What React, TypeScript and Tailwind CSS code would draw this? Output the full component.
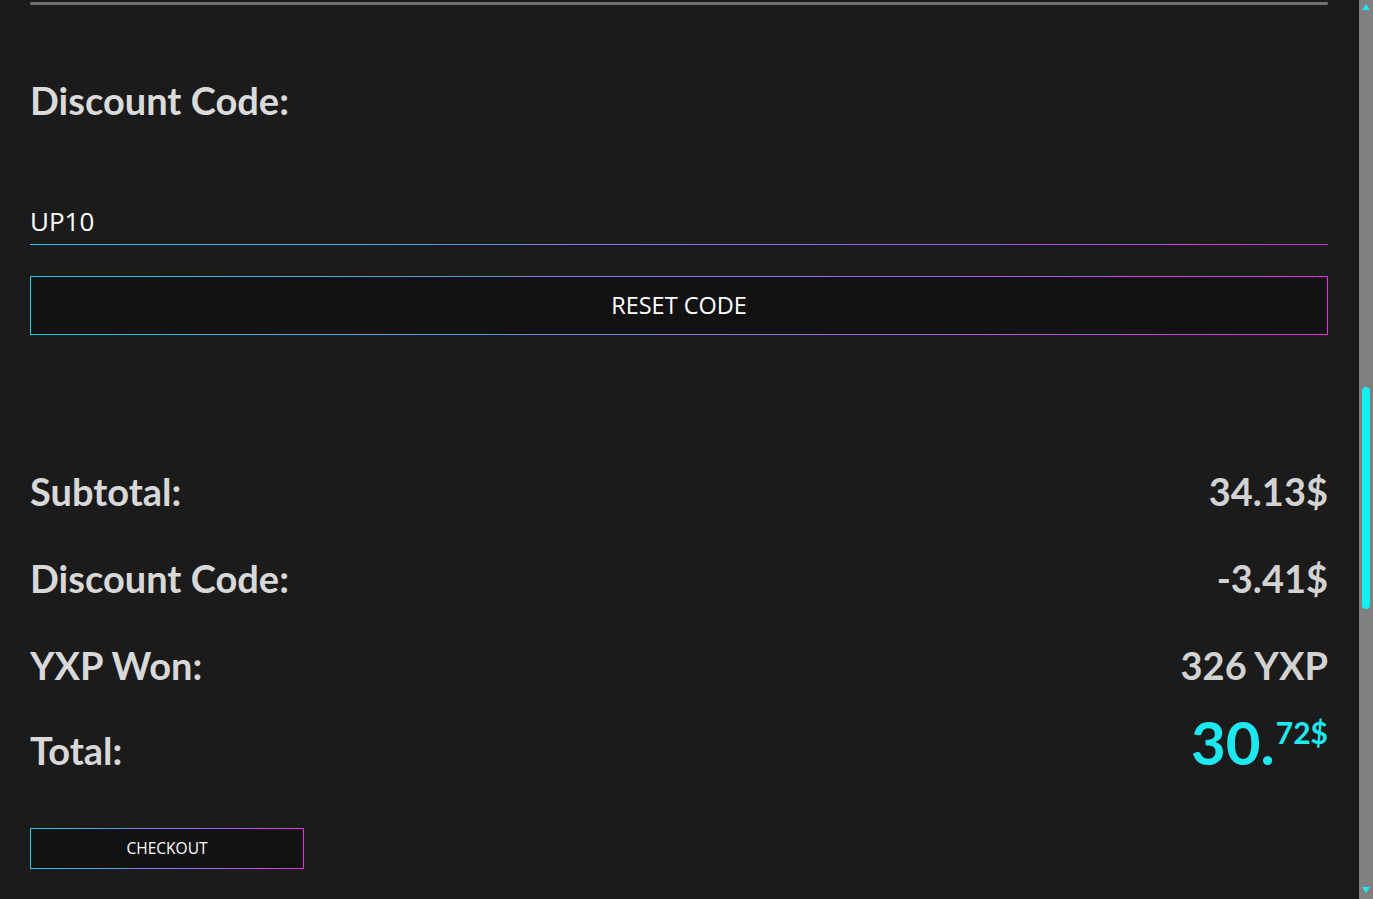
import { useState } from 'react';

const rows = [
  { label: 'Subtotal:', value: '34.13$' },
  { label: 'Discount Code:', value: '-3.41$' },
  { label: 'YXP Won:', value: '326 YXP' },
];

const gradientBorder = 'border border-solid [border-image:linear-gradient(to_right,#22cce4,#e030e0)_1]';

function GradientButton({ className, children }: { className: string; children: React.ReactNode }) {
  return (
    <button
      className={`${gradientBorder} bg-[#121212] text-white flex items-center justify-center font-['Open_Sans',sans-serif] ${className}`}
    >
      {children}
    </button>
  );
}

export default function App() {
  const [code, setCode] = useState('UP10');

  return (
    <div className="flex h-[899px] w-full overflow-hidden bg-[#1b1b1b] font-['Lato',sans-serif]">
      <main className="flex-1 px-[30px] pt-[2px]">
        <div className="h-[3px] rounded-full bg-[#707070]" />

        <h2 className="mt-[76px] text-[38px] leading-[38px] font-bold text-[#dadada]">Discount Code:</h2>

        <div className="mt-[80px]">
          <input
            value={code}
            onChange={(e) => setCode(e.target.value)}
            className="block w-full h-[45px] pb-[2px] bg-transparent text-[26px] text-white outline-none font-['Open_Sans',sans-serif]"
          />
          <div className="h-px bg-[linear-gradient(to_right,#22cce4,#d030d8)]" />
        </div>

        <GradientButton className="mt-[31px] w-full h-[59px]">
          <span className="text-[23.5px]">RESET CODE</span>
        </GradientButton>

        <div className="mt-[137px] flex flex-col gap-[49px]">
          {rows.map((r) => (
            <div key={r.label} className="flex justify-between items-baseline text-[38px] leading-[38px] text-[#d8d8d8]">
              <span className="font-bold">{r.label}</span>
              <span className="font-bold text-[#d2d2d2]">{r.value}</span>
            </div>
          ))}
        </div>

        <div className="mt-[28px] flex justify-between items-baseline">
          <span className="text-[38px] leading-[38px] font-bold text-[#d8d8d8]">Total:</span>
          <span className="inline-flex items-start font-bold text-[#1ee8ef]">
            <span className="text-[60px] leading-[60px]">30.</span>
            <span className="mt-[5px] ml-[1px] text-[30px] leading-[30px]">72$</span>
          </span>
        </div>

        <GradientButton className="mt-[56px] w-[274px] h-[41px]">
          <span className="text-[15.5px]">CHECKOUT</span>
        </GradientButton>
      </main>

      <div className="relative w-[15px] h-full bg-[#808080] border-l border-[#151515]">
        <div className="absolute left-1/2 -translate-x-1/2 top-[4px] w-0 h-0 border-l-[4px] border-r-[4px] border-b-[6px] border-l-transparent border-r-transparent border-b-[#1ee8ef]" />
        <div className="absolute left-[3px] top-[387px] w-[8px] h-[222px] rounded-full bg-[#12eef2]" />
        <div className="absolute left-1/2 -translate-x-1/2 bottom-[6px] w-0 h-0 border-l-[4px] border-r-[4px] border-t-[6px] border-l-transparent border-r-transparent border-t-[#1ee8ef]" />
      </div>
    </div>
  );
}
